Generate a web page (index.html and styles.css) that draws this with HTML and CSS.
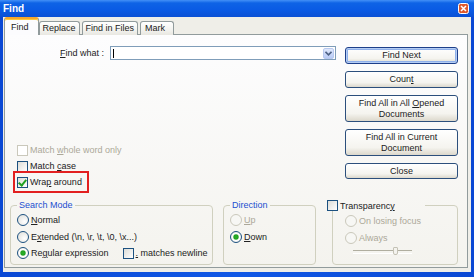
FILE: index.html
```html
<!DOCTYPE html>
<html lang="en">
<head>
    <meta charset="UTF-8">
    <title>Find</title>
    <link rel="stylesheet" href="styles.css">
</head>
<body>
    <div class="window">
        <div class="titlebar">
            <span class="title">Find</span>
            <span class="close-btn">
                <svg width="11" height="11" viewBox="0 0 11 11">
                    <rect x="0.5" y="0.5" width="10" height="10" rx="2" fill="#e0592b" stroke="#fff"/>
                    <path d="M3 3 L8 8 M8 3 L3 8" stroke="#fff" stroke-width="1.5"/>
                </svg>
            </span>
        </div>
        <div class="client">
            <div class="tabs">
                <div class="tab active">Find</div>
                <div class="tab">Replace</div>
                <div class="tab">Find in Files</div>
                <div class="tab mark">Mark</div>
            </div>
            <div class="page">
                <div class="top">
                    <div class="left">
                        <div class="find-row">
                            <span class="find-label"><u>F</u>ind what :</span>
                            <div class="combo">
                                <span class="caret"></span>
                                <span class="drop">
                                    <svg width="7" height="5" viewBox="0 0 7 5"><path d="M0.5 0.8 L3.5 3.8 L6.5 0.8" fill="none" stroke="#4d6185" stroke-width="1.6"/></svg>
                                </span>
                            </div>
                        </div>
                        <div class="options">
                            <div class="check disabled"><span class="box"></span><span>Match <u>w</u>hole word only</span></div>
                            <div class="check"><span class="box"></span><span>Match <u>c</u>ase</span></div>
                            <div class="check marked"><span class="box checked"></span><span>Wra<u>p</u> around</span></div>
                        </div>
                    </div>
                    <div class="buttons">
                        <div class="btn default"><span>Find Next</span></div>
                        <div class="btn"><span>Coun<u>t</u></span></div>
                        <div class="btn tall"><span>Find All in All <u>O</u>pened<br>Documents</span></div>
                        <div class="btn tall"><span>Find All in Current<br>Document</span></div>
                        <div class="btn short"><span>Close</span></div>
                    </div>
                </div>
                <div class="groups">
                    <fieldset class="group mode">
                        <legend>Search Mode</legend>
                        <div class="radio"><span class="dot"></span><span><u>N</u>ormal</span></div>
                        <div class="radio"><span class="dot"></span><span>E<u>x</u>tended (\n, \r, \t, \0, \x...)</span></div>
                        <div class="radio"><span class="dot on"></span><span>Re<u>g</u>ular expression</span>
                            <span class="newline"><span class="box"></span><span><u>.</u> matches newline</span></span>
                        </div>
                    </fieldset>
                    <fieldset class="group direction">
                        <legend>Direction</legend>
                        <div class="radio disabled"><span class="dot"></span><span><u>U</u>p</span></div>
                        <div class="radio"><span class="dot on"></span><span><u>D</u>own</span></div>
                    </fieldset>
                    <fieldset class="group transparency">
                        <legend><span class="box"></span><span>Transparenc<u>y</u></span></legend>
                        <div class="radio disabled"><span class="dot"></span><span>On losing focus</span></div>
                        <div class="radio disabled"><span class="dot"></span><span>Always</span></div>
                        <div class="slider"><span class="thumb"></span></div>
                    </fieldset>
                </div>
            </div>
        </div>
    </div>
</body>
</html>
```

FILE: styles.css
```css
* {
    box-sizing: border-box;
}
body {
    margin: 0;
    font-family: 'Liberation Sans', Arial, sans-serif;
    font-size: 9px;
    color: #222;
}
.window {
    width: 474px;
    height: 277px;
    display: flex;
    flex-direction: column;
    background: linear-gradient(90deg, #0a48d4, #1158e6 50%, #0a48d4);
}
.titlebar {
    height: 17px;
    display: flex;
    align-items: center;
    justify-content: space-between;
    padding: 0 5px 0 3px;
    background: linear-gradient(#4390f7, #0e63e6 3px, #0a5ae4 60%, #0b50d4);
    color: #fff;
}
.title {
    font-weight: bold;
    font-size: 10px;
}
.close-btn svg {
    display: block;
}
.client {
    flex: 1;
    margin: 0 3px 5px;
    padding: 0 3px 4px 1px;
    background: #efeee8;
    display: flex;
    flex-direction: column;
}
.tabs {
    height: 17px;
    display: flex;
    align-items: flex-end;
}
.tab {
    height: 14px;
    padding: 0 3px;
    margin-right: 2px;
    margin-bottom: -1px;
    line-height: 13px;
    border: 1px solid #919b9c;
    border-bottom: none;
    border-radius: 3px 3px 0 0;
    background: linear-gradient(#ffffff, #f3f3ef 60%, #e8e7e1);
    position: relative;
}
.tab.mark {
    padding: 0 8px 0 4px;
}
.tab.active {
    height: 18px;
    padding: 2px 9px 0 6px;
    margin-right: 0;
    background: #fcfcfe;
    border-top: 2px solid #f4a72f;
    box-shadow: inset 0 1px 0 #ffc83c;
    z-index: 1;
}
.page {
    flex: 1;
    border: 1px solid #919b9c;
    background: linear-gradient(#fdfdfe, #f4f3ee);
    display: flex;
    flex-direction: column;
}
.top {
    height: 165px;
    display: flex;
}
.left {
    flex: 1;
    display: flex;
    flex-direction: column;
    justify-content: space-between;
    padding: 11px 0 10px 12px;
}
.find-row {
    display: flex;
    align-items: center;
    padding-left: 43px;
}
.find-label {
    width: 50px;
}
.combo {
    width: 226px;
    height: 14px;
    border: 1px solid #7f9db9;
    background: #fff;
    display: flex;
    align-items: center;
    justify-content: space-between;
    padding: 0 1px 0 2px;
}
.caret {
    width: 1px;
    height: 9px;
    background: #000;
}
.drop {
    width: 11px;
    height: 11px;
    border-radius: 2px;
    background: linear-gradient(#dfe8fc, #b9cbf6);
    border: 1px solid #b8c9ef;
    display: flex;
    align-items: center;
    justify-content: center;
}
.drop svg {
    display: block;
}
.options {
    display: flex;
    flex-direction: column;
}
.check {
    height: 16px;
    display: flex;
    align-items: center;
    align-self: flex-start;
}
.box {
    width: 11px;
    height: 11px;
    border: 1px solid #1c5180;
    background: linear-gradient(135deg, #dcdcd7, #fff);
    margin-right: 2px;
    flex-shrink: 0;
    display: inline-block;
}
.check.disabled {
    color: #aca899;
}
.check.disabled .box {
    border-color: #cac8bb;
    background: #fff;
}
.box.checked {
    position: relative;
}
.box.checked::after {
    content: "";
    position: absolute;
    left: 2px;
    top: 0;
    width: 3px;
    height: 6px;
    border: solid #21a121;
    border-width: 0 2px 2px 0;
    transform: rotate(40deg);
}
.check.marked {
    outline: 2px solid #e22020;
    outline-offset: 1px;
    padding-right: 4px;
    margin-left: -1px;
    padding-left: 1px;
}
.buttons {
    width: 113px;
    margin-right: 9px;
    padding-top: 12px;
    display: flex;
    flex-direction: column;
    gap: 7px;
}
.btn {
    height: 17px;
    border: 1px solid #2c4f7c;
    border-radius: 3px;
    background: linear-gradient(#ffffff, #f5f4ef 70%, #dcd8cc);
    display: flex;
    align-items: center;
    justify-content: center;
    text-align: center;
    line-height: 11px;
}
.btn.default {
    border-color: #1d3f8a;
    box-shadow: inset 0 0 0 1px #b5cdf4, inset 0 0 0 2px #8fb0ea;
}
.btn.tall {
    height: 27px;
}
.btn.short {
    height: 16px;
}
.groups {
    height: 65px;
    display: flex;
    padding-left: 5px;
}
.group {
    margin: 0;
    padding: 2px 0 0 6px;
    border: 1px solid #d0d0bf;
    border-radius: 4px;
    min-width: 0;
}
.group legend {
    color: #1c4fd0;
    padding: 0 2px;
    line-height: 10px;
}
.mode {
    width: 203px;
    margin-right: 10px;
}
.direction {
    width: 93px;
    margin-right: 16px;
}
.transparency {
    width: 126px;
    padding-left: 0;
}
.transparency legend {
    margin-left: -6px;
    padding: 0 30px 0 0;
    color: #222;
    display: flex;
    align-items: center;
}
.transparency .radio {
    margin-left: 12px;
}
.radio {
    height: 16.5px;
    display: flex;
    align-items: center;
}
.dot {
    width: 12px;
    height: 12px;
    border-radius: 50%;
    border: 1px solid #1c5180;
    background: radial-gradient(circle at 65% 65%, #fff, #dcdcd7);
    margin-right: 2px;
    flex-shrink: 0;
}
.dot.on {
    background: radial-gradient(circle, #2bb02b 0, #21a121 2.2px, #a8dba8 2.8px, #fff 3.5px, #dcdcd7);
}
.radio.disabled {
    color: #aca899;
}
.radio.disabled .dot {
    border-color: #cac8bb;
    background: #f7f7f4;
}
.newline {
    display: flex;
    align-items: center;
    margin-left: 14px;
}
.slider {
    width: 59px;
    height: 9px;
    margin: 1px 0 0 20px;
    position: relative;
}
.slider::before {
    content: "";
    position: absolute;
    left: 0;
    right: 0;
    top: 3px;
    height: 2px;
    border-top: 1px solid #b0aea0;
    border-bottom: 1px solid #fff;
}
.thumb {
    position: absolute;
    left: 40px;
    top: 0;
    width: 5px;
    height: 8px;
    border: 1px solid #c4c2b5;
    border-radius: 1px 1px 2px 2px;
    background: #f4f3ee;
}
```
